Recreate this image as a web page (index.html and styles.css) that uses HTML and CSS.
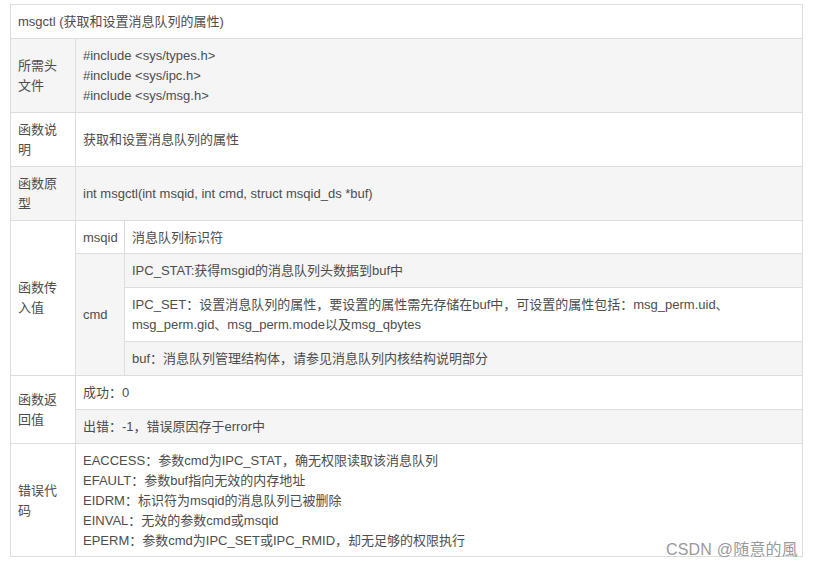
FILE: index.html
```html
<!DOCTYPE html>
<html lang="zh-CN">
<head>
    <meta charset="UTF-8">
    <title>msgctl</title>
    <link rel="stylesheet" href="styles.css">
</head>
<body>
    <div class="wrap">
        <table class="api-table">
            <colgroup>
                <col class="col-label">
                <col class="col-sub">
                <col>
            </colgroup>
            <tr>
                <td colspan="3">msgctl (获取和设置消息队列的属性)</td>
            </tr>
            <tr>
                <td>所需头文件</td>
                <td colspan="2" class="code-lines">#include &lt;sys/types.h&gt;<br>#include &lt;sys/ipc.h&gt;<br>#include &lt;sys/msg.h&gt;</td>
            </tr>
            <tr>
                <td>函数说明</td>
                <td colspan="2">获取和设置消息队列的属性</td>
            </tr>
            <tr>
                <td>函数原型</td>
                <td colspan="2">int msgctl(int msqid, int cmd, struct msqid_ds *buf)</td>
            </tr>
            <tr>
                <td rowspan="4">函数传入值</td>
                <td>msqid</td>
                <td>消息队列标识符</td>
            </tr>
            <tr>
                <td rowspan="3">cmd</td>
                <td>IPC_STAT:获得msgid的消息队列头数据到buf中</td>
            </tr>
            <tr>
                <td>IPC_SET：设置消息队列的属性，要设置的属性需先存储在buf中，可设置的属性包括：msg_perm.uid、msg_perm.gid、msg_perm.mode以及msg_qbytes</td>
            </tr>
            <tr>
                <td>buf：消息队列管理结构体，请参见消息队列内核结构说明部分</td>
            </tr>
            <tr>
                <td rowspan="2">函数返回值</td>
                <td colspan="2">成功：0</td>
            </tr>
            <tr>
                <td colspan="2">出错：-1，错误原因存于error中</td>
            </tr>
            <tr>
                <td>错误代码</td>
                <td colspan="2">EACCESS：参数cmd为IPC_STAT，确无权限读取该消息队列<br>EFAULT：参数buf指向无效的内存地址<br>EIDRM：标识符为msqid的消息队列已被删除<br>EINVAL：无效的参数cmd或msqid<br>EPERM：参数cmd为IPC_SET或IPC_RMID，却无足够的权限执行</td>
            </tr>
        </table>
        <div class="watermark">CSDN @随意的風</div>
    </div>
</body>
</html>
```

FILE: styles.css
```css
body {
    margin: 0;
    padding: 4px 12px 0 10px;
    background-color: #fff;
    font-family: 'Liberation Sans', Arial, 'Noto Sans CJK SC', sans-serif;
    font-size: 13px;
    color: #4d4d4d;
}
.wrap {
    position: relative;
    width: 793px;
}
.api-table {
    width: 793px;
    border-collapse: collapse;
    table-layout: fixed;
    line-height: 19.9px;
}
.col-label {
    width: 65px;
}
.col-sub {
    width: 49px;
}
.api-table td {
    border: 1px solid #ddd;
    padding: 7px 7px 6px;
    vertical-align: middle;
    text-align: left;
}
.api-table td.code-lines {
    line-height: 20px;
}
.api-table tr:nth-child(even) td {
    background-color: #f5f5f5;
}
.watermark {
    position: absolute;
    right: 5px;
    bottom: -3px;
    font-size: 16px;
    line-height: 20px;
    color: #9a9a9a;
    letter-spacing: 0.2px;
}
```
